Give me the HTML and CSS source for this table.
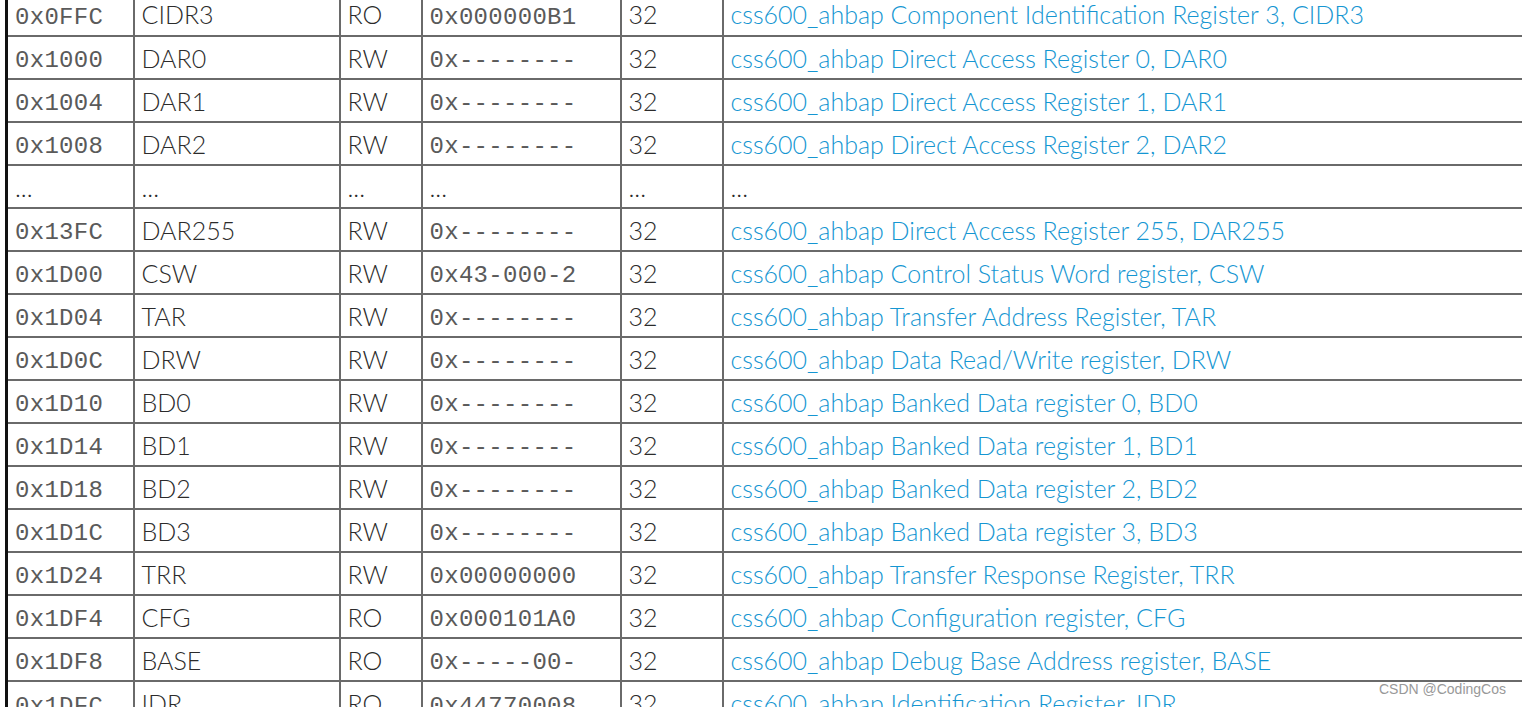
FILE: index.html
```html
<!DOCTYPE html>
<html lang="en">
<head>
  <meta charset="UTF-8" />
  <title>css600_ahbap register summary</title>
  <link rel="stylesheet" href="styles.css">
</head>
<body>
  <div class="page">
    <table class="regs">
      <colgroup>
        <col class="c-off"><col class="c-name"><col class="c-type"><col class="c-reset"><col class="c-width"><col class="c-desc">
      </colgroup>
      <tbody>
        <tr><td class="mono">0x0FFC</td><td>CIDR3</td><td>RO</td><td class="mono">0x000000B1</td><td>32</td><td><a href="#">css600_ahbap Component Identification Register 3, CIDR3</a></td></tr>
        <tr><td class="mono">0x1000</td><td>DAR0</td><td>RW</td><td class="mono">0x--------</td><td>32</td><td><a href="#">css600_ahbap Direct Access Register 0, DAR0</a></td></tr>
        <tr><td class="mono">0x1004</td><td>DAR1</td><td>RW</td><td class="mono">0x--------</td><td>32</td><td><a href="#">css600_ahbap Direct Access Register 1, DAR1</a></td></tr>
        <tr><td class="mono">0x1008</td><td>DAR2</td><td>RW</td><td class="mono">0x--------</td><td>32</td><td><a href="#">css600_ahbap Direct Access Register 2, DAR2</a></td></tr>
        <tr><td>...</td><td>...</td><td>...</td><td>...</td><td>...</td><td>...</td></tr>
        <tr><td class="mono">0x13FC</td><td>DAR255</td><td>RW</td><td class="mono">0x--------</td><td>32</td><td><a href="#">css600_ahbap Direct Access Register 255, DAR255</a></td></tr>
        <tr><td class="mono">0x1D00</td><td>CSW</td><td>RW</td><td class="mono">0x43-000-2</td><td>32</td><td><a href="#">css600_ahbap Control Status Word register, CSW</a></td></tr>
        <tr><td class="mono">0x1D04</td><td>TAR</td><td>RW</td><td class="mono">0x--------</td><td>32</td><td><a href="#">css600_ahbap Transfer Address Register, TAR</a></td></tr>
        <tr><td class="mono">0x1D0C</td><td>DRW</td><td>RW</td><td class="mono">0x--------</td><td>32</td><td><a href="#">css600_ahbap Data Read/Write register, DRW</a></td></tr>
        <tr><td class="mono">0x1D10</td><td>BD0</td><td>RW</td><td class="mono">0x--------</td><td>32</td><td><a href="#">css600_ahbap Banked Data register 0, BD0</a></td></tr>
        <tr><td class="mono">0x1D14</td><td>BD1</td><td>RW</td><td class="mono">0x--------</td><td>32</td><td><a href="#">css600_ahbap Banked Data register 1, BD1</a></td></tr>
        <tr><td class="mono">0x1D18</td><td>BD2</td><td>RW</td><td class="mono">0x--------</td><td>32</td><td><a href="#">css600_ahbap Banked Data register 2, BD2</a></td></tr>
        <tr><td class="mono">0x1D1C</td><td>BD3</td><td>RW</td><td class="mono">0x--------</td><td>32</td><td><a href="#">css600_ahbap Banked Data register 3, BD3</a></td></tr>
        <tr><td class="mono">0x1D24</td><td>TRR</td><td>RW</td><td class="mono">0x00000000</td><td>32</td><td><a href="#">css600_ahbap Transfer Response Register, TRR</a></td></tr>
        <tr><td class="mono">0x1DF4</td><td>CFG</td><td>RO</td><td class="mono">0x000101A0</td><td>32</td><td><a href="#">css600_ahbap Configuration register, CFG</a></td></tr>
        <tr><td class="mono">0x1DF8</td><td>BASE</td><td>RO</td><td class="mono">0x-----00-</td><td>32</td><td><a href="#">css600_ahbap Debug Base Address register, BASE</a></td></tr>
        <tr><td class="mono">0x1DFC</td><td>IDR</td><td>RO</td><td class="mono">0x44770008</td><td>32</td><td><a href="#">css600_ahbap Identification Register, IDR</a></td></tr>
      </tbody>
    </table>
    <div class="watermark">CSDN @CodingCos</div>
  </div>
</body>
</html>
```

FILE: styles.css
```css
* { box-sizing: border-box; margin: 0; padding: 0; }
html, body { overflow: hidden; background: #fff; }
body {
  width: 1522px; height: 707px;
  font-family: "Lato Light", Lato, "Noto Sans", sans-serif;
  color: #2b2b2b;
}
.page {
  position: relative;
  width: 1522px; height: 707px;
  overflow: hidden;
  padding-left: 5px;
}
.regs {
  margin-top: -7px;
  width: 1540px;
  table-layout: fixed;
  border-collapse: collapse;
  border-left: 3px solid #111;
}
.c-off   { width: 127px; }
.c-name  { width: 206px; }
.c-type  { width: 82px; }
.c-reset { width: 199px; }
.c-width { width: 102px; }
.c-desc  { width: auto; }

.regs td {
  height: 43px;
  padding: 0 7px;
  border-top: 2px solid #6a6a6a;
  border-left: 2px solid #6a6a6a;
  font-size: 25px;
  white-space: nowrap;
  vertical-align: middle;
}
.regs tr:first-child td { border-top: 0; }
.regs td:first-child { border-left: 0; }
.regs td.mono {
  font-family: "Liberation Mono", monospace;
  font-size: 24px;
  line-height: 34px;
  letter-spacing: 0.3px;
  color: #5a5a5a;
  vertical-align: bottom;
}
.regs a {
  color: #1596d2;
  text-decoration: none;
}

.watermark {
  position: absolute; right: 16px; bottom: 10px;
  font-family: "Liberation Sans", Arial, sans-serif;
  font-size: 14px; color: #999;
}
```
